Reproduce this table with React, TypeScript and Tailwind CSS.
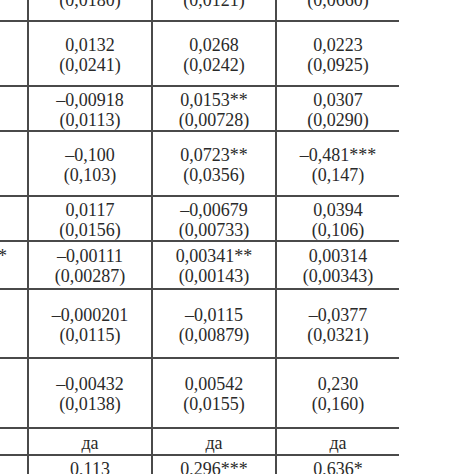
import React from "react";

type Row = { h: string; label?: string; cells: string[][] };

const rows: Row[] = [
  { h: "h-[65px]", cells: [["0,0302", "(0,0180)"], ["0,0140", "(0,0121)"], ["0,0731", "(0,0660)"]] },
  { h: "h-[65px]", cells: [["0,0132", "(0,0241)"], ["0,0268", "(0,0242)"], ["0,0223", "(0,0925)"]] },
  { h: "h-[45px]", cells: [["–0,00918", "(0,0113)"], ["0,0153**", "(0,00728)"], ["0,0307", "(0,0290)"]] },
  { h: "h-[65px]", cells: [["–0,100", "(0,103)"], ["0,0723**", "(0,0356)"], ["–0,481***", "(0,147)"]] },
  { h: "h-[45px]", cells: [["0,0117", "(0,0156)"], ["–0,00679", "(0,00733)"], ["0,0394", "(0,106)"]] },
  { h: "h-[48px]", label: "*", cells: [["–0,00111", "(0,00287)"], ["0,00341**", "(0,00143)"], ["0,00314", "(0,00343)"]] },
  { h: "h-[69px]", cells: [["–0,000201", "(0,0115)"], ["–0,0115", "(0,00879)"], ["–0,0377", "(0,0321)"]] },
  { h: "h-[70px]", cells: [["–0,00432", "(0,0138)"], ["0,00542", "(0,0155)"], ["0,230", "(0,160)"]] },
  { h: "h-[27px]", cells: [["да"], ["да"], ["да"]] },
  { h: "h-[26px]", cells: [["0,113"], ["0,296***"], ["0,636*"]] },
];

export default function App() {
  return (
    <div className="w-[474px] h-[474px] overflow-hidden bg-white font-['Liberation_Serif','Times_New_Roman',serif] text-[18px] leading-[20px] text-[#2a2a2a]">
      <div className="w-[399px] -mt-[43px]">
        {rows.map((r, i) => (
          <div
            key={i}
            className={`grid grid-cols-[27px_124px_124px_124px] border-b-2 border-[#4a4a4a] ${r.h}`}
          >
            <div className="flex flex-col justify-center items-end pr-[20px] pt-[2px]">
              {r.label ? (
                <>
                  <span>{r.label}</span>
                  <span>&nbsp;</span>
                </>
              ) : null}
            </div>
            {r.cells.map((c, j) => (
              <div
                key={j}
                className="flex flex-col items-center justify-center border-l-2 border-[#4a4a4a] whitespace-nowrap pt-[2px]"
              >
                {c.map((t, k) => (
                  <span key={k}>{t}</span>
                ))}
              </div>
            ))}
          </div>
        ))}
      </div>
    </div>
  );
}
